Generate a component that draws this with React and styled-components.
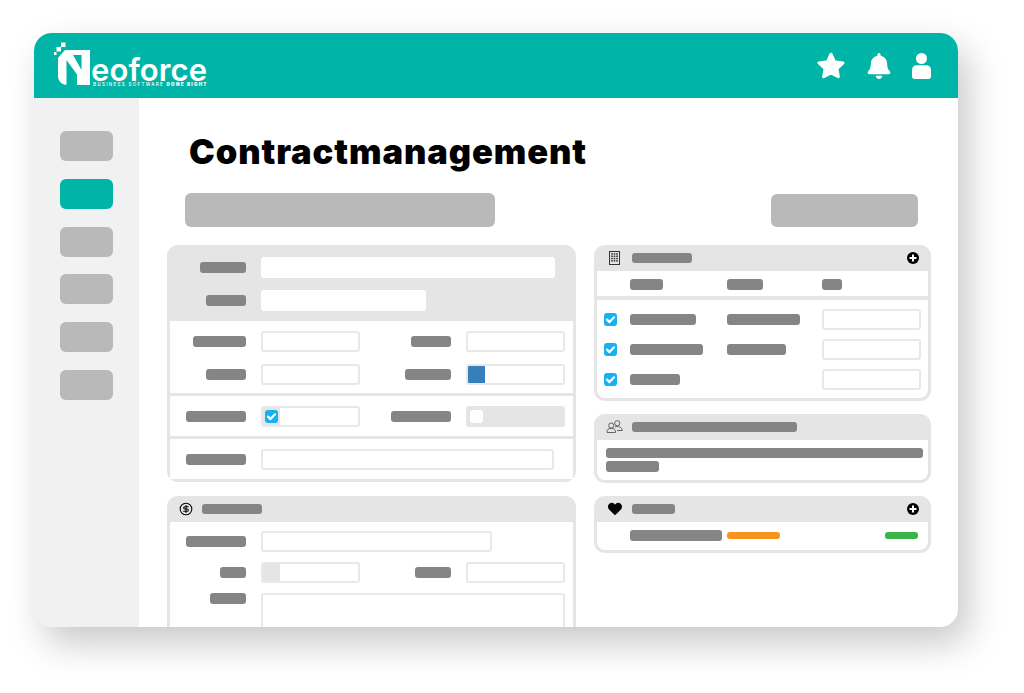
import React from "react";
import styled, { createGlobalStyle } from "styled-components";
import { FaHeart, FaBell } from "react-icons/fa";
import { CircleDollarSign } from "lucide-react";

const GlobalStyle = createGlobalStyle`
  html, body {
    margin: 0;
    padding: 0;
    background: #fff;
    overflow: hidden;
    font-family: "Inter", "Liberation Sans", sans-serif;
  }
`;

const Page = styled.div`
  width: 1024px;
  height: 693px;
  padding: 33px 0 0 34px;
  box-sizing: border-box;
`;

const Window = styled.div`
  width: 924px;
  height: 594px;
  border-radius: 18px;
  overflow: hidden;
  display: flex;
  flex-direction: column;
  background: #fff;
  box-shadow: 10px 16px 36px rgba(0, 0, 0, 0.22);
`;

const Header = styled.header`
  height: 65px;
  flex: none;
  background: #00b5a7;
  display: flex;
  align-items: center;
  justify-content: space-between;
  padding: 0 27px 0 20px;
`;

const Logo = styled.div`
  display: flex;
  align-items: flex-start;
  align-self: flex-start;
  margin-top: 7px;
`;

const LogoWords = styled.div`
  margin: 18px 0 0 0;
  color: #fff;
`;

const LogoName = styled.div`
  font-size: 31px;
  line-height: 24px;
  font-weight: 600;
  letter-spacing: 0.1px;
`;

const LogoTag = styled.div`
  margin: 0 0 0 2px;
  font-size: 4.5px;
  line-height: 5px;
  letter-spacing: 1.32px;
  white-space: nowrap;
  font-weight: 500;
  b {
    font-weight: 900;
  }
`;

const HeaderIcons = styled.div`
  display: flex;
  align-items: center;
  gap: 20.5px;
  color: #fff;
`;

const Body = styled.div`
  flex: 1;
  display: flex;
  min-height: 0;
`;

const Sidebar = styled.nav`
  width: 105px;
  flex: none;
  background: #f1f1f1;
  display: flex;
  flex-direction: column;
  gap: 17.8px;
  padding: 33px 0 0 26px;
  box-sizing: border-box;
`;

const NavItem = styled.div`
  width: 53px;
  height: 30px;
  border-radius: 6px;
  background: ${(p) => (p.$active ? "#00b5a7" : "#b9b9b9")};
`;

const Main = styled.main`
  flex: 1;
  min-width: 0;
  padding: 30px 27px 0 28px;
`;

const Title = styled.h1`
  margin: 0 0 0 22px;
  font-family: "Inter", sans-serif;
  font-size: 34.5px;
  line-height: 44px;
  font-weight: 900;
  letter-spacing: 0.9px;
  color: #000;
  position: relative;
  top: 2px;
`;

const Toolbar = styled.div`
  margin: 21px 13px 18px 18px;
  display: flex;
  justify-content: space-between;
  align-items: center;
`;

const ToolBlock = styled.div`
  width: ${(p) => p.$w}px;
  height: ${(p) => p.$h}px;
  border-radius: 6px;
  background: #b9b9b9;
`;

const Columns = styled.div`
  display: grid;
  grid-template-columns: 409px 337px;
  column-gap: 18px;
  align-items: start;
`;

const Stack = styled.div`
  display: flex;
  flex-direction: column;
  gap: ${(p) => p.$gap}px;
`;

const Panel = styled.section`
  border: 3px solid #e5e5e5;
  border-radius: 11px;
  background: #fff;
`;

const PanelHead = styled.div`
  box-sizing: border-box;
  height: 22.5px;
  padding-bottom: 3px;
  background: #e5e5e5;
  display: flex;
  align-items: center;
  position: relative;
`;

const HeadIcon = styled.span`
  width: ${(p) => p.$w || 35}px;
  flex: none;
  display: flex;
  justify-content: center;
  color: #000;
`;

const Plus = styled.svg`
  position: absolute;
  right: 9px;
  top: 3.5px;
`;

const Bar = styled.div`
  width: ${(p) => p.$w}px;
  height: 10.5px;
  border-radius: 3px;
  background: #858585;
  flex: none;
`;

const FormSection = styled.div`
  display: grid;
  grid-template-columns: 76px 99px 76px 99px;
  column-gap: 15px;
  row-gap: ${(p) => p.$rowGap ?? 12}px;
  align-items: center;
  padding: ${(p) => p.$pad || "10px 0 9px"};
  background: ${(p) => (p.$gray ? "#e5e5e5" : "#fff")};
  border-top: ${(p) => (p.$line ? "3px solid #e5e5e5" : "none")};
`;

const FieldLabel = styled(Bar)`
  justify-self: end;
  align-self: ${(p) => (p.$top ? "start" : "center")};
`;

const Input = styled.div`
  box-sizing: border-box;
  height: 21px;
  width: ${(p) => (p.$w ? `${p.$w}px` : "100%")};
  grid-column: ${(p) => (p.$w ? "2 / -1" : "auto")};
  border: 2px solid ${(p) => (p.$solid ? "#fff" : "#e8e8e8")};
  border-radius: 3px;
  background: #fff;
  overflow: hidden;
`;

const TextArea = styled(Input)`
  grid-column: 2 / -1;
  width: 100%;
  height: 60px;
`;

const Addon = styled.div`
  width: 17px;
  height: 100%;
  background: #e5e5e5;
`;

const ColorSwatch = styled.div`
  width: 17px;
  height: 100%;
  background: #377fba;
`;

const CheckField = styled(Input)`
  display: flex;
  align-items: center;
`;

const CheckSlot = styled.div`
  width: 15px;
  height: 21px;
  margin-left: -2px;
  background: #e5e5e5;
  display: flex;
  align-items: center;
  padding-left: 4px;
  flex: none;
`;

const ToggleField = styled.div`
  height: 21px;
  border-radius: 3px;
  background: #e5e5e5;
  display: flex;
  align-items: center;
  padding-left: 4px;
`;

const ToggleKnob = styled.div`
  width: 13px;
  height: 13px;
  border-radius: 3px;
  background: #fff;
`;

const TableHead = styled.div`
  display: grid;
  grid-template-columns: 97px 95px 1fr;
  align-items: center;
  padding: 3px 0 0 33px;
  height: 22px;
  border-bottom: 4px solid #e5e5e5;
`;

const TableBody = styled.div`
  display: flex;
  flex-direction: column;
  gap: 9px;
  padding: 9.5px 0 8px;
`;

const TableRow = styled.div`
  display: grid;
  grid-template-columns: 13px 110px 95px 99px;
  align-items: center;
  padding-left: 7px;
  & > :nth-child(2) {
    margin-left: 13px;
  }
`;

const NotesBody = styled.div`
  display: flex;
  flex-direction: column;
  gap: 3px;
  padding: 8px 5px 8.5px 9px;
`;

const FavRow = styled.div`
  display: flex;
  align-items: center;
  height: 28px;
  padding: 0 10px 0 33px;
`;

const Pill = styled.div`
  width: ${(p) => p.$w}px;
  height: 6.5px;
  border-radius: 3px;
  background: ${(p) => p.$color};
  margin-left: ${(p) => p.$left}px;
`;

const Star = () => (
  <svg width="28" height="28" viewBox="1 0.8 28 28">
    <polygon
      points="15,3 18.6,10.6 27,11.7 20.9,17.5 22.4,25.5 15,21.6 7.6,25.5 9.1,17.5 3,11.7 11.4,10.6"
      fill="#fff"
      stroke="#fff"
      strokeWidth="3"
      strokeLinejoin="round"
    />
  </svg>
);

const User = () => (
  <svg width="19" height="26" viewBox="0 0 19 26">
    <circle cx="9.5" cy="5.5" r="5.5" fill="#fff" />
    <path
      d="M0 23.5V17c0-3 2-4.8 4.8-4.8h9.4C17 12.2 19 14 19 17v6.5c0 1.5-1 2.5-2.5 2.5h-14C1 26 0 25 0 23.5z"
      fill="#fff"
    />
  </svg>
);

const LogoMark = () => (
  <svg width="37" height="46" viewBox="0 0 37 46">
    <rect x="7" y="2.5" width="4.5" height="4.5" fill="#fff" />
    <rect x="2.5" y="7" width="4.5" height="4.5" fill="#fff" />
    <rect x="0" y="12" width="2.5" height="3" fill="#fff" />
    <path d="M4 18l7-8h25v35H13c-5 0-9-4-9-9z" fill="#fff" />
    <path d="M19 15h8.5v15zM12.5 20V45H23V34.5z" fill="#00b5a7" />
  </svg>
);

const Check = () => (
  <svg width="13" height="13" viewBox="0 0 13 13">
    <rect width="13" height="13" rx="3" fill="#16b1f0" />
    <path
      d="M3 6.6l2.5 2.500L10 4.300"
      fill="none"
      stroke="#fff"
      strokeWidth="2.2"
      strokeLinecap="round"
      strokeLinejoin="round"
    />
  </svg>
);

const PlusIcon = () => (
  <Plus width="12" height="12" viewBox="0 0 12 12">
    <circle cx="6" cy="6" r="6" fill="#000" />
    <path d="M6 2.5v7M2.5 6h7" stroke="#fff" strokeWidth="2" />
  </Plus>
);

const Building = () => (
  <svg width="11" height="14" viewBox="0 0 11 14">
    <rect x="0.5" y="0.5" width="10" height="13" fill="#e5e5e5" stroke="#333" />
    {[2.2, 4.5, 6.8, 9.1].map((y) =>
      [2.2, 4.7, 7.2].map((x) => (
        <rect key={`${x}-${y}`} x={x} y={y} width="1.6" height="1.5" fill="#333" />
      ))
    )}
  </svg>
);

const People = () => (
  <svg width="17" height="13" viewBox="0 0 18 14" fill="none" stroke="#555" strokeWidth="1">
    <circle cx="5.5" cy="6" r="2.8" />
    <path d="M1 13.5c-.6-3 1.5-4.500 4.500-4.500s5 1.500 4.500 4.500z" />
    <circle cx="12" cy="3.5" r="2.8" />
    <path d="M9.5 7.500c1.800-.6 3.500-.6 4.800 0 2 .6 3.200 2 3 3.800h-5.500" />
  </svg>
);

export default function App() {
  return (
    <Page>
      <GlobalStyle />
      <Window>
        <Header>
          <Logo>
            <LogoMark />
            <LogoWords>
              <LogoName>eoforce</LogoName>
              <LogoTag>
                BUSINESS SOFTWARE <b>DONE RIGHT</b>
              </LogoTag>
            </LogoWords>
          </Logo>
          <HeaderIcons>
            <Star />
            <FaBell size={26} />
            <User />
          </HeaderIcons>
        </Header>
        <Body>
          <Sidebar>
            <NavItem />
            <NavItem $active />
            <NavItem />
            <NavItem />
            <NavItem />
            <NavItem />
          </Sidebar>
          <Main>
            <Title>Contractmanagement</Title>
            <Toolbar>
              <ToolBlock $w={310} $h={34} />
              <ToolBlock $w={147} $h={33} />
            </Toolbar>
            <Columns>
              <Stack $gap={14}>
                <Panel>
                  <FormSection $gray $pad="9px 0 10px">
                    <FieldLabel $w={46} />
                    <Input $w={294} $solid />
                    <FieldLabel $w={40} />
                    <Input $w={165} $solid />
                  </FormSection>
                  <FormSection $pad="10px 0 8px">
                    <FieldLabel $w={53} />
                    <Input />
                    <FieldLabel $w={40} />
                    <Input />
                    <FieldLabel $w={40} />
                    <Input />
                    <FieldLabel $w={46} />
                    <Input>
                      <ColorSwatch />
                    </Input>
                  </FormSection>
                  <FormSection $line>
                    <FieldLabel $w={60} />
                    <CheckField>
                      <CheckSlot>
                        <Check />
                      </CheckSlot>
                    </CheckField>
                    <FieldLabel $w={60} />
                    <ToggleField>
                      <ToggleKnob />
                    </ToggleField>
                  </FormSection>
                  <FormSection $line>
                    <FieldLabel $w={60} />
                    <Input $w={293} />
                  </FormSection>
                </Panel>
                <Panel>
                  <PanelHead>
                    <HeadIcon $w={32}>
                      <CircleDollarSign size={14} strokeWidth={1.8} />
                    </HeadIcon>
                    <Bar $w={60} />
                  </PanelHead>
                  <FormSection $pad="9.5px 0 0" $rowGap={10}>
                    <FieldLabel $w={60} />
                    <Input $w={231} />
                    <FieldLabel $w={26} />
                    <Input>
                      <Addon />
                    </Input>
                    <FieldLabel $w={36} />
                    <Input />
                    <FieldLabel $w={36} $top />
                    <TextArea />
                  </FormSection>
                </Panel>
              </Stack>
              <Stack $gap={13}>
                <Panel>
                  <PanelHead>
                    <HeadIcon>
                      <Building />
                    </HeadIcon>
                    <Bar $w={60} />
                    <PlusIcon />
                  </PanelHead>
                  <TableHead>
                    <Bar $w={33} />
                    <Bar $w={36} />
                    <Bar $w={20} />
                  </TableHead>
                  <TableBody>
                    <TableRow>
                      <Check />
                      <Bar $w={66} />
                      <Bar $w={73} />
                      <Input />
                    </TableRow>
                    <TableRow>
                      <Check />
                      <Bar $w={73} />
                      <Bar $w={59} />
                      <Input />
                    </TableRow>
                    <TableRow>
                      <Check />
                      <Bar $w={50} />
                      <span />
                      <Input />
                    </TableRow>
                  </TableBody>
                </Panel>
                <Panel>
                  <PanelHead>
                    <HeadIcon>
                      <People />
                    </HeadIcon>
                    <Bar $w={165} />
                  </PanelHead>
                  <NotesBody>
                    <Bar $w={317} />
                    <Bar $w={53} />
                  </NotesBody>
                </Panel>
                <Panel>
                  <PanelHead>
                    <HeadIcon>
                      <FaHeart size={14} />
                    </HeadIcon>
                    <Bar $w={43} />
                    <PlusIcon />
                  </PanelHead>
                  <FavRow>
                    <Bar $w={92} />
                    <Pill $w={53} $color="#f7941d" $left={5} />
                    <Pill $w={33} $color="#39b54a" $left={105} />
                  </FavRow>
                </Panel>
              </Stack>
            </Columns>
          </Main>
        </Body>
      </Window>
    </Page>
  );
}
